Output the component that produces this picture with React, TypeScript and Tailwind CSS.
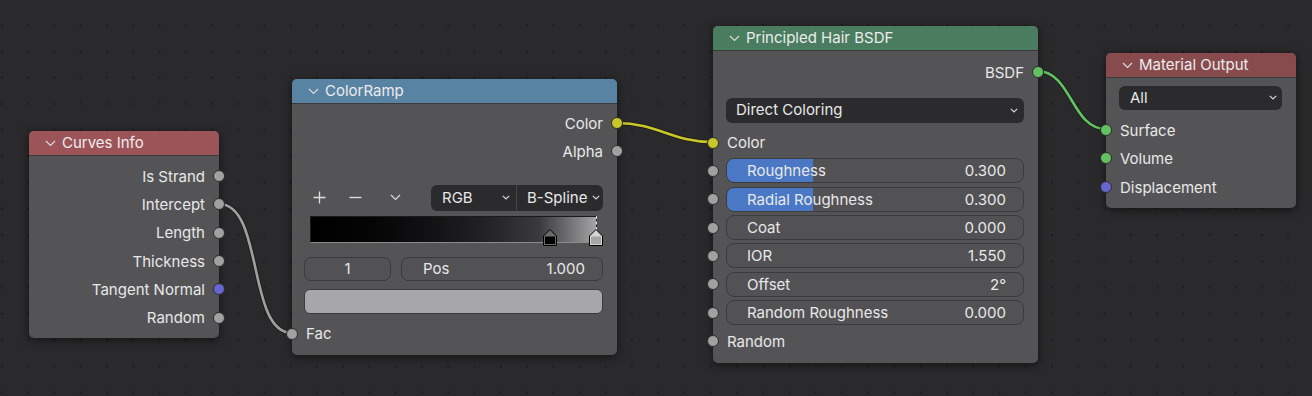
import React from 'react'

type SocketKind = 'gray' | 'yellow' | 'blue' | 'green'

const socketColor: Record<SocketKind, string> = {
  gray: 'bg-[#a1a1a1]',
  yellow: 'bg-[#c9c62a]',
  blue: 'bg-[#6666d0]',
  green: 'bg-[#62c262]',
}

const Chevron = ({ className = '' }: { className?: string }) => (
  <svg width="11" height="7" viewBox="0 0 11 7" className={className}>
    <polyline points="1,1 5.5,5.5 10,1" fill="none" stroke="#dcdcdc" strokeWidth="1.15" />
  </svg>
)

const SmallChevron = () => (
  <svg width="8" height="5" viewBox="0 0 8 5">
    <polyline points="0.8,0.8 4,4 7.2,0.8" fill="none" stroke="#d8d8d8" strokeWidth="1.2" />
  </svg>
)

const Socket = ({ kind, side }: { kind: SocketKind; side: 'left' | 'right' }) => (
  <span
    className={`absolute top-1/2 h-[12px] w-[12px] -translate-y-1/2 rounded-full border border-[#2c2c2c] ${
      side === 'left' ? '-left-[6px]' : '-right-[6px]'
    } ${socketColor[kind]}`}
  />
)

const Output = ({ label, kind = 'gray' }: { label: string; kind?: SocketKind }) => (
  <div className="relative flex h-[28.33px] items-center justify-end pr-[14px]">
    <span className="pt-[2px]">{label}</span>
    <Socket kind={kind} side="right" />
  </div>
)

const Input = ({ label, kind = 'gray' }: { label: string; kind?: SocketKind }) => (
  <div className="relative flex h-[28.33px] items-center pl-[14px]">
    <span className="pt-[2px]">{label}</span>
    <Socket kind={kind} side="left" />
  </div>
)

const Slider = ({ label, value, fill = 0 }: { label: string; value: string; fill?: number }) => (
  <div className="relative flex h-[28.33px] items-center pl-[13px] pr-[14px]">
    <Socket kind="gray" side="left" />
    <div className="relative flex h-[25px] w-full items-center justify-between overflow-hidden rounded-[8px] border border-[#3b3b3d] bg-[#525254] pl-[20px] pr-[17px]">
      {fill > 0 && (
        <div
          className="absolute inset-y-0 left-0 bg-[#4a78c4]"
          style={{ width: `calc(${fill * 100}% - 3px)` }}
        />
      )}
      <span className="relative pt-[1px]">{label}</span>
      <span className="relative pt-[1px]">{value}</span>
    </div>
  </div>
)

const Node = ({
  title,
  header,
  className,
  children,
}: {
  title: string
  header: string
  className: string
  children: React.ReactNode
}) => (
  <div className={`absolute flex flex-col rounded-[5px] bg-[#545456] shadow-[0_2px_10px_rgba(0,0,0,0.55)] ${className}`}>
    <div className={`flex h-[25px] shrink-0 items-center gap-[6px] rounded-t-[5px] border-b border-[#3a3a3c] pl-[16px] ${header}`}>
      <Chevron />
      <span className="pt-[1px] text-[#ececec]">{title}</span>
    </div>
    {children}
  </div>
)

const StopMarker = ({ x, active }: { x: number; active?: boolean }) => (
  <svg
    width="16"
    height="19"
    viewBox="0 0 16 19"
    className="absolute top-[12px]"
    style={{ left: x - 8 }}
  >
    <path d="M1.5 8 L8 1.5 L14.5 8 L14.5 17.5 L1.5 17.5 Z" fill={active ? '#d6d6d6' : '#6a6a6a'} stroke="#000" strokeWidth="1" />
    <rect x="3" y="8.5" width="10" height="7.5" fill={active ? '#a5a5a5' : '#000'} />
  </svg>
)

export default function App() {
  return (
    <div className="relative h-[396px] w-[1312px] overflow-hidden bg-[#2a2a2c] font-['Inter','Noto_Sans',sans-serif] text-[15px] text-[#e8e8e8]">
      {/* grid dots + wires */}
      <svg className="absolute inset-0" width="1312" height="396">
        <defs>
          <pattern id="dots" width="26.25" height="26.25" patternUnits="userSpaceOnUse">
            <rect x="1" y="24" width="2" height="2" fill="#1d1d1f" />
          </pattern>
        </defs>
        <rect width="1312" height="396" fill="url(#dots)" />
        <g fill="none" strokeLinecap="round">
          <path d="M219 204 C264 204 247 333 292 333" stroke="#1e1e1e" strokeWidth="4.5" />
          <path d="M219 204 C264 204 247 333 292 333" stroke="#a0a0a0" strokeWidth="2.6" />
          <path d="M617 123 C657 123 672 142 712 142" stroke="#1e1e1e" strokeWidth="4.5" />
          <path d="M617 123 C657 123 672 142 712 142" stroke="#c9c62a" strokeWidth="2.6" />
          <path d="M1037 71 C1072 71 1071 129 1106 129" stroke="#1e1e1e" strokeWidth="4.5" />
          <path d="M1037 71 C1072 71 1071 129 1106 129" stroke="#62c262" strokeWidth="2.6" />
        </g>
      </svg>

      <Node title="Curves Info" header="bg-[#9d5459]" className="left-[29px] top-[131px] w-[190px] pb-[6px]">
        <div className="flex flex-col pt-[5.8px]">
          <Output label="Is Strand" />
          <Output label="Intercept" />
          <Output label="Length" />
          <Output label="Thickness" />
          <Output label="Tangent Normal" kind="blue" />
          <Output label="Random" />
        </div>
      </Node>

      <Node title="ColorRamp" header="bg-[#5983a3]" className="left-[292px] top-[79px] w-[325px] pb-[7px]">
        <div className="flex flex-col pt-[5px]">
          <Output label="Color" kind="yellow" />
          <Output label="Alpha" />

          <div className="mt-[19.3px] flex h-[26px] items-center pl-[13px] pr-[14px]">
            <div className="flex w-[28px] justify-center">
              <svg width="13" height="13" viewBox="0 0 13 13">
                <path d="M6.5 0.5 V12.5 M0.5 6.5 H12.5" stroke="#e0e0e0" strokeWidth="1.3" />
              </svg>
            </div>
            <div className="ml-[8px] flex w-[28px] justify-center">
              <svg width="13" height="13" viewBox="0 0 13 13">
                <path d="M0.5 6.5 H12.5" stroke="#e0e0e0" strokeWidth="1.3" />
              </svg>
            </div>
            <div className="ml-[12px] flex w-[28px] justify-center">
              <Chevron />
            </div>
            <div className="ml-auto flex h-[26px] w-[172px] rounded-[6px] bg-[#2b2b2d]">
              <div className="flex w-[86px] items-center justify-between border-r border-[#454547] pl-[11px] pr-[6px]">
                <span className="pt-[1px]">RGB</span>
                <SmallChevron />
              </div>
              <div className="flex flex-1 items-center justify-between pl-[10px] pr-[3px]">
                <span className="pt-[1px]">B-Spline</span>
                <SmallChevron />
              </div>
            </div>
          </div>

          <div className="relative ml-[18px] mt-[5px] h-[27px] w-[287px]">
            <div className="h-full w-full border border-[#1a1a1a] border-b-[#8c8c8e] bg-[linear-gradient(to_right,#000_0%,#050506_22%,#141417_45%,#232327_62%,#3a3a3e_80%,#6e6e70_90%,#a4a4a6_100%)]" />
            <div className="absolute right-0 top-0 h-[14px] border-r border-dashed border-[#e0e0e0]" />
            <StopMarker x={240} />
            <StopMarker x={286} active />
          </div>

          <div className="mt-[14px] flex h-[24.5px] gap-[10px] pl-[12px] pr-[14px]">
            <div className="flex w-[87px] items-center justify-center rounded-[7px] border border-[#3b3b3d] bg-[#525254] pt-[1px]">
              1
            </div>
            <div className="flex flex-1 items-center justify-between rounded-[7px] border border-[#3b3b3d] bg-[#525254] pl-[21px] pr-[17px] pt-[1px]">
              <span>Pos</span>
              <span>1.000</span>
            </div>
          </div>

          <div className="ml-[12px] mr-[14px] mt-[8px] h-[25px] rounded-[6px] border border-[#3b3b3d] bg-[#a7a6a8]" />

          <div className="mt-[5px]">
            <Input label="Fac" />
          </div>
        </div>
      </Node>

      <Node title="Principled Hair BSDF" header="bg-[#4a7c5f]" className="left-[713px] top-[26px] w-[325px] pb-[7.5px]">
        <div className="flex flex-col pt-[6.7px]">
          <Output label="BSDF" kind="green" />
          <div className="mb-[5.8px] ml-[13px] mr-[14px] mt-[11.7px] flex h-[25px] items-center justify-between rounded-[6px] bg-[#2b2b2d] pl-[10px] pr-[6px]">
            <span className="pt-[1px]">Direct Coloring</span>
            <SmallChevron />
          </div>
          <Input label="Color" kind="yellow" />
          <Slider label="Roughness" value="0.300" fill={0.3} />
          <Slider label="Radial Roughness" value="0.300" fill={0.3} />
          <Slider label="Coat" value="0.000" />
          <Slider label="IOR" value="1.550" />
          <Slider label="Offset" value="2°" />
          <Slider label="Random Roughness" value="0.000" />
          <Input label="Random" />
        </div>
      </Node>

      <Node title="Material Output" header="bg-[#874b4e]" className="left-[1106px] top-[53px] w-[190px] pb-[7px]">
        <div className="flex flex-col">
          <div className="mb-[5.8px] ml-[13px] mr-[14px] mt-[7.7px] flex h-[24.5px] items-center justify-between rounded-[6px] bg-[#2b2b2d] pl-[11px] pr-[5px]">
            <span className="pt-[1px]">All</span>
            <SmallChevron />
          </div>
          <Input label="Surface" kind="green" />
          <Input label="Volume" kind="green" />
          <Input label="Displacement" kind="blue" />
        </div>
      </Node>
    </div>
  )
}
